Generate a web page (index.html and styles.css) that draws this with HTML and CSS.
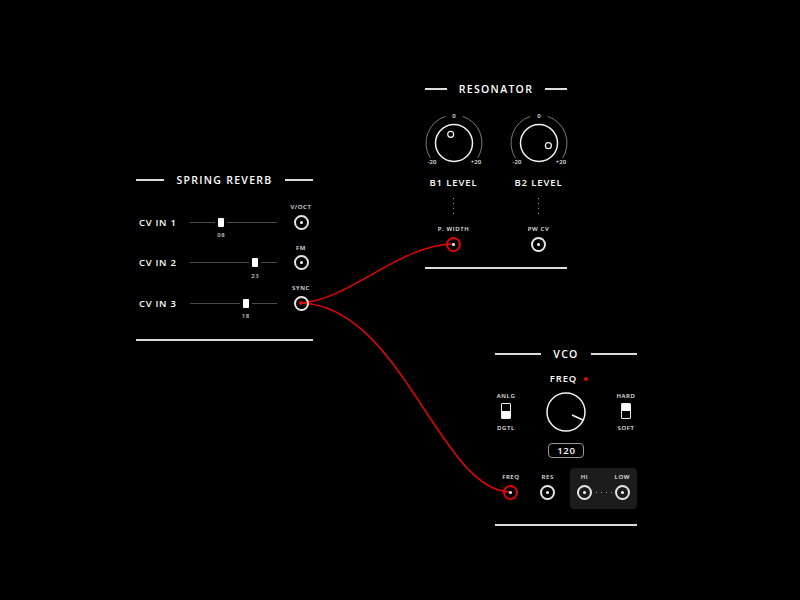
FILE: index.html
```html
<!DOCTYPE html>
<html>
<head>
  <title>Patch Rack</title>
  <link rel="stylesheet" href="styles.css">
</head>
<body>
  <div class="rack">
    <!-- patch cables sit under the modules so jack dots draw on top -->
    <svg class="cables" width="800" height="600" viewBox="0 0 800 600">
      <path d="M301 303 C 350 300, 400 244, 454 244" />
      <path d="M301 303 C 402 306, 440 492, 511 492" />
    </svg>

    <div class="module reverb">
      <div class="module-title"><span>SPRING REVERB</span></div>
      <div class="cv-rows">
        <div class="cv-row">
          <div class="cv-label">CV IN 1</div>
          <div class="slider">
            <div class="handle" style="left: 36%"><span class="value">08</span></div>
          </div>
          <div class="jack-col">
            <div class="tiny">V/OCT</div>
            <div class="jack"></div>
          </div>
        </div>
        <div class="cv-row">
          <div class="cv-label">CV IN 2</div>
          <div class="slider">
            <div class="handle" style="left: 75%"><span class="value">23</span></div>
          </div>
          <div class="jack-col">
            <div class="tiny">FM</div>
            <div class="jack"></div>
          </div>
        </div>
        <div class="cv-row">
          <div class="cv-label">CV IN 3</div>
          <div class="slider">
            <div class="handle" style="left: 64%"><span class="value">18</span></div>
          </div>
          <div class="jack-col">
            <div class="tiny">SYNC</div>
            <div class="jack source"></div>
          </div>
        </div>
      </div>
      <div class="module-rule"></div>
    </div>

    <div class="module resonator">
      <div class="module-title"><span>RESONATOR</span></div>
      <div class="band-row">
        <div class="band">
          <svg class="knob" width="60" height="54" viewBox="0 0 60 54">
            <path class="arc" d="M6.26 44.84 A28 28 0 0 1 21.35 3.37 M38.65 3.37 A28 28 0 0 1 53.74 44.84" />
            <text x="30" y="4.5">0</text>
            <text x="8" y="51">-20</text>
            <text x="52" y="51">+20</text>
            <circle class="dial" cx="30" cy="30" r="18.5" />
            <circle class="pointer" cx="26.7" cy="21.3" r="3" />
          </svg>
          <div class="band-label">B1 LEVEL</div>
          <div class="dots"></div>
          <div class="jack-col">
            <div class="tiny">P. WIDTH</div>
            <div class="jack patched"></div>
          </div>
        </div>
        <div class="band">
          <svg class="knob" width="60" height="54" viewBox="0 0 60 54">
            <path class="arc" d="M6.26 44.84 A28 28 0 0 1 21.35 3.37 M38.65 3.37 A28 28 0 0 1 53.74 44.84" />
            <text x="30" y="4.5">0</text>
            <text x="8" y="51">-20</text>
            <text x="52" y="51">+20</text>
            <circle class="dial" cx="30" cy="30" r="18.5" />
            <circle class="pointer" cx="39.4" cy="32.7" r="3" />
          </svg>
          <div class="band-label">B2 LEVEL</div>
          <div class="dots"></div>
          <div class="jack-col">
            <div class="tiny">PW CV</div>
            <div class="jack"></div>
          </div>
        </div>
      </div>
      <div class="module-rule"></div>
    </div>

    <div class="module vco">
      <div class="module-title"><span>VCO</span></div>
      <div class="freq-head">FREQ <span class="led"></span></div>
      <div class="freq-row">
        <div class="switch-col">
          <div class="tiny">ANLG</div>
          <div class="switch down"></div>
          <div class="tiny">DGTL</div>
        </div>
        <svg class="freq-knob" width="40" height="40" viewBox="0 0 40 40">
          <circle cx="20" cy="20" r="19" />
          <line x1="26" y1="23" x2="37" y2="28" />
        </svg>
        <div class="switch-col">
          <div class="tiny">HARD</div>
          <div class="switch up"></div>
          <div class="tiny">SOFT</div>
        </div>
      </div>
      <div class="readout">120</div>
      <div class="out-row">
        <div class="jack-col out-freq">
          <div class="tiny">FREQ</div>
          <div class="jack patched"></div>
        </div>
        <div class="jack-col out-res">
          <div class="tiny">RES</div>
          <div class="jack"></div>
        </div>
        <div class="range-panel">
          <div class="jack-col">
            <div class="tiny">HI</div>
            <div class="jack"></div>
          </div>
          <div class="link"></div>
          <div class="jack-col">
            <div class="tiny">LOW</div>
            <div class="jack"></div>
          </div>
        </div>
      </div>
      <div class="module-rule"></div>
    </div>
  </div>
</body>
</html>
```

FILE: styles.css
```css
/* patch rack: three modules on a black canvas */
body {
  margin: 0;
  background: #000;
  color: #fff;
  font-family: "Open Sans", "Liberation Sans", sans-serif;
}

.rack {
  position: relative;
  width: 800px;
  height: 600px;
  overflow: hidden;
}

.cables {
  position: absolute;
  left: 0;
  top: 0;
}

.cables path {
  fill: none;
  stroke: #e10600;
  stroke-width: 1.5;
}

.module {
  position: absolute;
}

.reverb {
  left: 136px;
  top: 174px;
  width: 177px;
}

.resonator {
  left: 425px;
  top: 83px;
  width: 142px;
}

.vco {
  left: 495px;
  top: 348px;
  width: 142px;
}

.module-title {
  display: flex;
  align-items: center;
  gap: 12px;
  height: 12px;
  font-size: 10.5px;
  font-weight: 600;
  letter-spacing: 1.3px;
  line-height: 12px;
}

.module-title::before,
.module-title::after {
  content: "";
  flex: 1;
  height: 2px;
  background: #dcdcdc;
}

.module-rule {
  height: 2px;
  background: #dcdcdc;
}

.tiny {
  font-size: 6px;
  font-weight: 600;
  letter-spacing: 0.6px;
  line-height: 8px;
  color: #ececec;
  white-space: nowrap;
}

/* jacks */
.jack-col {
  display: flex;
  flex-direction: column;
  align-items: center;
}

.jack-col .tiny {
  margin-bottom: 3.5px;
}

.jack {
  box-sizing: border-box;
  width: 15px;
  height: 15px;
  border: 2px solid #e6e6e6;
  border-radius: 50%;
  display: flex;
  align-items: center;
  justify-content: center;
}

.jack::after {
  content: "";
  width: 3px;
  height: 3px;
  border-radius: 50%;
  background: #fff;
}

.jack.patched {
  border-color: #e10600;
}

.jack.source::after {
  width: 4px;
  height: 4px;
  background: #e10600;
}

/* spring reverb */
.cv-rows {
  display: flex;
  flex-direction: column;
  gap: 14px;
  margin-top: 17px;
  margin-bottom: 28.5px;
}

.cv-row {
  display: flex;
  align-items: flex-end;
}

.cv-label {
  box-sizing: border-box;
  width: 54px;
  padding-left: 3px;
  font-size: 9.5px;
  font-weight: 600;
  letter-spacing: 0.7px;
  line-height: 15px;
}

.slider {
  position: relative;
  width: 87px;
  height: 15px;
  background: linear-gradient(#4a4a4a, #4a4a4a) center / 100% 1px no-repeat;
}

.handle {
  position: absolute;
  top: 3px;
  width: 6px;
  height: 9px;
  margin-left: -3px;
  background: #fff;
  border-radius: 1px;
  box-shadow: 0 0 0 3px #000;
}

.value {
  position: absolute;
  left: 50%;
  top: 13.5px;
  transform: translateX(-50%);
  font-size: 6px;
  font-weight: 600;
  letter-spacing: 0.6px;
  line-height: 8px;
  color: #d0d0d0;
}

.reverb .jack-col {
  width: 24px;
  margin-left: 12px;
}

/* resonator */
.band-row {
  display: flex;
  justify-content: space-between;
  margin-top: 18px;
  margin-bottom: 15.5px;
}

.band {
  width: 57px;
  display: flex;
  flex-direction: column;
  align-items: center;
}

.knob {
  flex: none;
}

.knob .arc {
  fill: none;
  stroke: #7a7a7a;
  stroke-width: 1;
}

.knob text {
  fill: #e6e6e6;
  font-family: "Open Sans", "Liberation Sans", sans-serif;
  font-size: 6px;
  font-weight: 600;
  text-anchor: middle;
}

.knob .dial,
.knob .pointer {
  fill: none;
  stroke: #f2f2f2;
  stroke-width: 1.5;
}

.knob .pointer {
  stroke-width: 1.2;
}

.band-label {
  margin-top: 10px;
  font-size: 9.5px;
  font-weight: 600;
  letter-spacing: 0.9px;
  line-height: 12px;
  white-space: nowrap;
}

.dots {
  width: 1px;
  height: 16px;
  margin-top: 8.5px;
  background: repeating-linear-gradient(to bottom, #9a9a9a 0 1px, transparent 1px 5px);
}

.band .jack-col {
  margin-top: 11.5px;
}

/* vco */
.freq-head {
  display: flex;
  justify-content: center;
  align-items: center;
  gap: 7px;
  margin-top: 13px;
  padding-left: 6px;
  font-size: 9.5px;
  font-weight: 600;
  letter-spacing: 0.9px;
  line-height: 12px;
}

.led {
  width: 4px;
  height: 4px;
  border-radius: 50%;
  background: #e10600;
}

.freq-row {
  display: flex;
  justify-content: space-between;
  align-items: center;
  height: 40px;
  margin-top: 7px;
}

.switch-col {
  width: 22px;
  display: flex;
  flex-direction: column;
  align-items: center;
}

.switch {
  box-sizing: border-box;
  width: 10px;
  height: 16px;
  margin: 3px 0 5px;
  border: 1px solid #f0f0f0;
  border-radius: 1px;
}

.switch.down {
  background: linear-gradient(to bottom, transparent 50%, #fff 50%);
}

.switch.up {
  background: linear-gradient(to bottom, #fff 50%, transparent 50%);
}

.freq-knob circle {
  fill: none;
  stroke: #f2f2f2;
  stroke-width: 1.5;
}

.freq-knob line {
  stroke: #f2f2f2;
  stroke-width: 1.5;
}

.readout {
  box-sizing: border-box;
  width: 36px;
  height: 15px;
  margin: 11px auto 0;
  padding-left: 1px;
  border: 1px solid #9a9a9a;
  border-radius: 4px;
  font-size: 9.5px;
  font-weight: 600;
  letter-spacing: 0.8px;
  line-height: 13px;
  text-align: center;
}

.out-row {
  display: flex;
  height: 41px;
  margin-top: 10px;
  margin-bottom: 15px;
}

.out-row > .jack-col {
  width: 24px;
  padding-top: 5px;
}

.out-freq {
  margin-left: 4px;
}

.out-res {
  margin-left: 13px;
}

.range-panel {
  box-sizing: border-box;
  width: 68px;
  margin-left: 10px;
  padding: 5px 7px 0 7.5px;
  display: flex;
  align-items: flex-start;
  background: #1c1c1c;
  border-radius: 4px;
}

.range-panel .jack-col {
  min-width: 15px;
}

.link {
  flex: 1;
  height: 1px;
  margin: 18.5px 2px 0;
  background: repeating-linear-gradient(to right, #9a9a9a 0 1px, transparent 1px 5px);
  background-position: 2px 0;
}
```
